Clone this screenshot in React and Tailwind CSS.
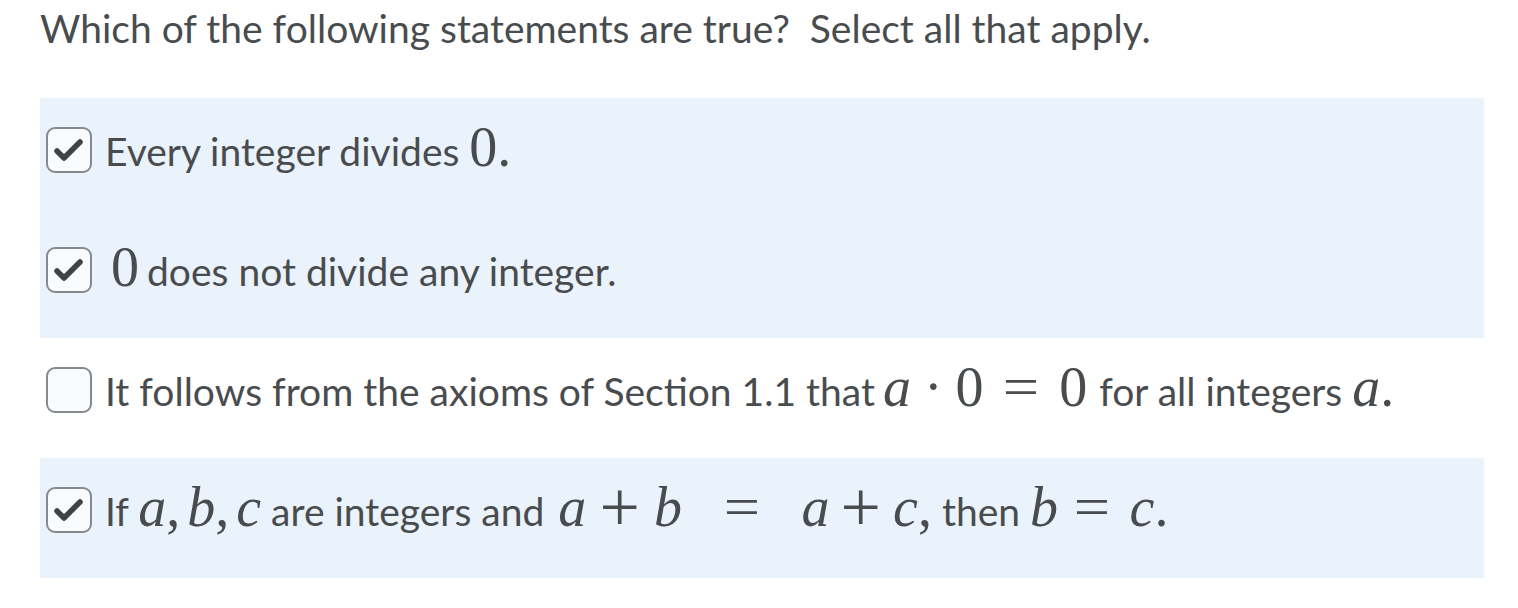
import React from "react";

// Inline math pieces: italic variables, upright digits and operators
const V = ({ children, className = "" }) => (
  <span className={"font-['Liberation_Serif'] italic text-[56px] leading-none " + className}>{children}</span>
);
const N = ({ children, className = "" }) => (
  <span className={"font-['Liberation_Serif'] text-[56px] leading-none " + className}>{children}</span>
);
// Binary operators are drawn a touch larger without changing the line box
const Plus = ({ className = "" }) => (
  <span className={"font-['Liberation_Serif'] text-[56px] leading-none inline-block scale-[1.28] " + className}>+</span>
);
const Eq = ({ className = "" }) => (
  <span className={"font-['Liberation_Serif'] text-[56px] leading-none inline-block scale-x-[1.15] " + className}>=</span>
);

const Check = ({ checked }) => (
  <span className="shrink-0 w-[46px] h-[46px] rounded-[9px] border-2 border-[#868a8e] bg-[#f9fbff] flex items-center justify-center">
    {checked && (
      <svg width="46" height="46" viewBox="0 0 46 46" className="-m-[2px]">
        <polyline
          points="11,24 18,31 34,15"
          fill="none"
          stroke="#3f4244"
          strokeWidth="5.5"
          strokeLinecap="round"
          strokeLinejoin="round"
        />
      </svg>
    )}
  </span>
);

const Row = ({ checked, shaded, children }) => (
  <div className={"h-[120px] flex items-center pb-4 pl-[6px] " + (shaded ? "bg-[#eaf2fc]" : "bg-white")}>
    <Check checked={checked} />
    <div className="ml-[13px] flex items-baseline whitespace-pre text-[39px]">{children}</div>
  </div>
);

export default function App() {
  return (
    <div className="w-[1518px] h-[608px] bg-white text-[#494c4e] font-['Lato',sans-serif]">
      <div className="px-10 pt-[4px] h-[98px] text-[39px] leading-[48px]">
        Which of the following statements are true?&nbsp; Select all that apply.
      </div>
      <div className="mx-10 w-[1444px]">
        <Row checked shaded>
          <span>Every integer divides </span>
          <N>0</N>
          <N>.</N>
        </Row>
        <Row checked shaded>
          <N className="ml-[6px] mr-[8px]">0</N>
          <span>does not divide any integer.</span>
        </Row>
        <Row>
          <span>It follows from the axioms of Section 1.1 that</span>
          <V className="ml-[8px]">a</V>
          <N className="mx-[13px]">·</N>
          <N>0</N>
          <Eq className="ml-[21px] mr-[23px]" />
          <N className="mr-[12px]">0</N>
          <span>for all integers </span>
          <V>a</V>
          <N>.</N>
        </Row>
        <Row checked shaded>
          <span>If </span>
          <V>a</V>
          <N className="mr-[7px]">,</N>
          <V>b</V>
          <N className="mr-[7px]">,</N>
          <V>c</V>
          <span> are integers and </span>
          <V className="ml-[4px]">a</V>
          <Plus className="mx-[18px]" />
          <V>b</V>
          <Eq className="mx-[44px]" />
          <V>a</V>
          <Plus className="mx-[16px]" />
          <V>c</V>
          <N>,</N>
          <span> then </span>
          <V>b</V>
          <Eq className="ml-[18px] mr-[22px]" />
          <V>c</V>
          <N>.</N>
        </Row>
      </div>
    </div>
  );
}
